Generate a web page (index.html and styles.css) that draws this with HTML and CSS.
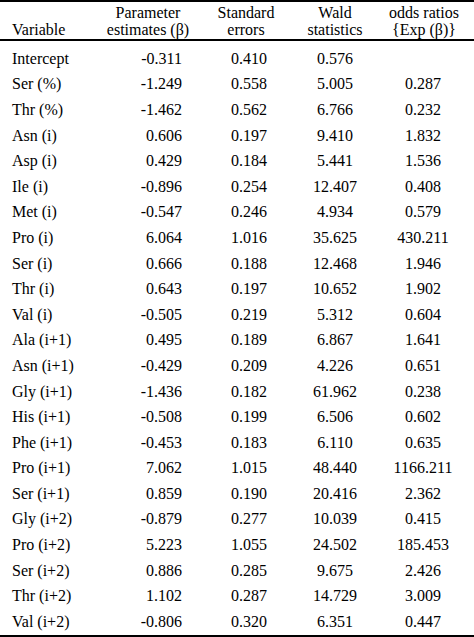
FILE: index.html
```html
<!DOCTYPE html>
<html>
<head>
<meta charset="utf-8">
<link rel="stylesheet" href="styles.css">
</head>
<body>
<table class="stats">
  <colgroup>
    <col class="c-var"><col class="c-par"><col class="c-std"><col class="c-wald"><col class="c-odds">
  </colgroup>
  <thead>
    <tr>
      <th class="h-var">Variable</th>
      <th>Parameter<br>estimates (β)</th>
      <th>Standard<br>errors</th>
      <th>Wald<br>statistics</th>
      <th>odds ratios<br>{Exp (β)}</th>
    </tr>
  </thead>
  <tbody>
    <tr class="first"><td class="var">Intercept</td><td class="par">-0.311</td><td class="std">0.410</td><td class="wald">0.576</td><td class="odds"></td></tr>
    <tr><td class="var">Ser (%)</td><td class="par">-1.249</td><td class="std">0.558</td><td class="wald">5.005</td><td class="odds">0.287</td></tr>
    <tr><td class="var">Thr (%)</td><td class="par">-1.462</td><td class="std">0.562</td><td class="wald">6.766</td><td class="odds">0.232</td></tr>
    <tr><td class="var">Asn (i)</td><td class="par">0.606</td><td class="std">0.197</td><td class="wald">9.410</td><td class="odds">1.832</td></tr>
    <tr><td class="var">Asp (i)</td><td class="par">0.429</td><td class="std">0.184</td><td class="wald">5.441</td><td class="odds">1.536</td></tr>
    <tr><td class="var">Ile (i)</td><td class="par">-0.896</td><td class="std">0.254</td><td class="wald">12.407</td><td class="odds">0.408</td></tr>
    <tr><td class="var">Met (i)</td><td class="par">-0.547</td><td class="std">0.246</td><td class="wald">4.934</td><td class="odds">0.579</td></tr>
    <tr><td class="var">Pro (i)</td><td class="par">6.064</td><td class="std">1.016</td><td class="wald">35.625</td><td class="odds">430.211</td></tr>
    <tr><td class="var">Ser (i)</td><td class="par">0.666</td><td class="std">0.188</td><td class="wald">12.468</td><td class="odds">1.946</td></tr>
    <tr><td class="var">Thr (i)</td><td class="par">0.643</td><td class="std">0.197</td><td class="wald">10.652</td><td class="odds">1.902</td></tr>
    <tr><td class="var">Val (i)</td><td class="par">-0.505</td><td class="std">0.219</td><td class="wald">5.312</td><td class="odds">0.604</td></tr>
    <tr><td class="var">Ala (i+1)</td><td class="par">0.495</td><td class="std">0.189</td><td class="wald">6.867</td><td class="odds">1.641</td></tr>
    <tr><td class="var">Asn (i+1)</td><td class="par">-0.429</td><td class="std">0.209</td><td class="wald">4.226</td><td class="odds">0.651</td></tr>
    <tr><td class="var">Gly (i+1)</td><td class="par">-1.436</td><td class="std">0.182</td><td class="wald">61.962</td><td class="odds">0.238</td></tr>
    <tr><td class="var">His (i+1)</td><td class="par">-0.508</td><td class="std">0.199</td><td class="wald">6.506</td><td class="odds">0.602</td></tr>
    <tr><td class="var">Phe (i+1)</td><td class="par">-0.453</td><td class="std">0.183</td><td class="wald">6.110</td><td class="odds">0.635</td></tr>
    <tr><td class="var">Pro (i+1)</td><td class="par">7.062</td><td class="std">1.015</td><td class="wald">48.440</td><td class="odds">1166.211</td></tr>
    <tr><td class="var">Ser (i+1)</td><td class="par">0.859</td><td class="std">0.190</td><td class="wald">20.416</td><td class="odds">2.362</td></tr>
    <tr><td class="var">Gly (i+2)</td><td class="par">-0.879</td><td class="std">0.277</td><td class="wald">10.039</td><td class="odds">0.415</td></tr>
    <tr><td class="var">Pro (i+2)</td><td class="par">5.223</td><td class="std">1.055</td><td class="wald">24.502</td><td class="odds">185.453</td></tr>
    <tr><td class="var">Ser (i+2)</td><td class="par">0.886</td><td class="std">0.285</td><td class="wald">9.675</td><td class="odds">2.426</td></tr>
    <tr><td class="var">Thr (i+2)</td><td class="par">1.102</td><td class="std">0.287</td><td class="wald">14.729</td><td class="odds">3.009</td></tr>
    <tr><td class="var">Val (i+2)</td><td class="par">-0.806</td><td class="std">0.320</td><td class="wald">6.351</td><td class="odds">0.447</td></tr>
  </tbody>
</table>
</body>
</html>
```

FILE: styles.css
```css
html, body {
  margin: 0;
  padding: 0;
  background: #ffffff;
}

.stats {
  width: 474px;
  border-collapse: collapse;
  table-layout: fixed;
  font-family: "Liberation Serif", "Times New Roman", serif;
  font-size: 16px;
  color: #000000;
  border-top: 2px solid #000000;
  border-bottom: 3px solid #000000;
}

.c-var { width: 100px; }
.c-par { width: 96px; }
.c-std { width: 100px; }
.c-wald { width: 78px; }
.c-odds { width: 100px; }

.stats thead tr {
  border-bottom: 2px solid #000000;
}

.stats th {
  font-weight: normal;
  text-align: center;
  vertical-align: bottom;
  line-height: 17px;
  padding: 2px 0 1px 0;
  height: 34px;
}

.stats th.h-var {
  text-align: left;
  padding-left: 12px;
}

.stats td {
  padding: 0;
  height: 25.6px;
  line-height: 18px;
  vertical-align: middle;
  white-space: nowrap;
}

.stats tbody tr.first td {
  padding-top: 5px;
}

.stats td.var {
  padding-left: 12px;
  text-align: left;
}

.stats td.par {
  text-align: right;
  padding-right: 14px;
}

.stats td.std {
  text-align: right;
  padding-right: 29px;
}

.stats td.wald {
  text-align: center;
}

.stats td.odds {
  text-align: center;
  padding-right: 2px;
}
```
